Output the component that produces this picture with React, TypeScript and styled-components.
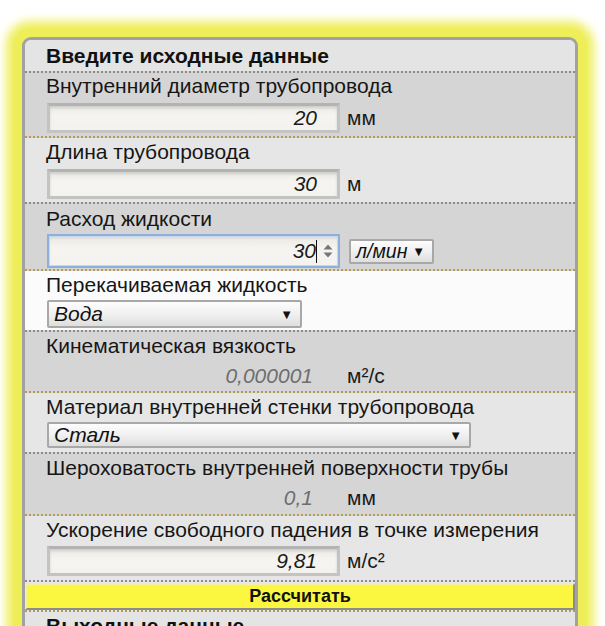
import React from "react";
import styled, { createGlobalStyle, css } from "styled-components";

const Global = createGlobalStyle`
  html, body { margin: 0; padding: 0; background: #ffffff; }
  body { font-family: "Liberation Sans", Arial, sans-serif; color: #111; overflow: hidden; }
`;

const Panel = styled.div`
  margin: 37px 0 0 22px;
  width: 550px;
  height: 620px;
  border: 3px solid #a2a2a2;
  border-bottom: none;
  border-radius: 9px 9px 0 0;
  background: #e6e6e6;
  box-shadow: 0 0 0 9px #eeee58, 0 0 10px 16px #efef62;
  overflow: hidden;
`;

const Header = styled.div`
  height: 31px;
  padding-left: 21px;
  display: flex;
  align-items: center;
  font-weight: bold;
  font-size: 21px;
  background: #e4e4e4;
  color: #111;
`;

type Tone = "light" | "dark" | "white";

const Row = styled.div<{ $tone: Tone; $h: number }>`
  height: ${(p) => p.$h}px;
  box-sizing: border-box;
  padding-left: 22px;
  display: flex;
  flex-direction: column;
  background: ${(p) => (p.$tone === "dark" ? "#d5d5d5" : p.$tone === "white" ? "#fbfbfb" : "#e6e6e6")};
  ${(p) =>
    p.$tone === "dark" &&
    css`
      border-top: 2px dotted #8d8d8d;
      border-bottom: 2px dotted #b39c55;
    `}
`;

const Label = styled.div<{ $mt: number }>`
  font-size: 21px;
  line-height: 24px;
  margin: ${(p) => p.$mt}px 0 0 -1px;
  color: #161616;
  white-space: nowrap;
`;

const Field = styled.div<{ $mt: number }>`
  display: flex;
  align-items: center;
  gap: 7px;
  margin-top: ${(p) => p.$mt}px;
`;

const InputBox = styled.div<{ $focus?: boolean }>`
  position: relative;
  width: 293px;
  height: 30px;
  box-sizing: border-box;
  border: 3px solid #c3c3c3;
  border-top-color: #b3b3b3;
  background: linear-gradient(#ebe9e4, #f5f4f0 40%, #f3f2ee);
  box-shadow: inset 0 2px 3px rgba(0, 0, 0, 0.12);
  display: flex;
  align-items: center;
  justify-content: flex-end;
  padding-right: 20px;
  font-size: 21px;
  font-style: italic;
  color: #1a1a1a;
  ${(p) =>
    p.$focus &&
    css`
      height: 34px;
      border: 2px solid #8eaedb;
      box-shadow: inset 0 0 0 1px #c9d8ee, inset 0 2px 3px rgba(0, 0, 0, 0.1);
      padding-right: 21px;
    `}
`;

const Caret = styled.span`
  display: inline-block;
  width: 1px;
  height: 23px;
  background: #111;
`;

const Spinner = styled.svg`
  position: absolute;
  right: 4px;
  top: 50%;
  transform: translateY(-50%);
`;

const Unit = styled.span`
  font-size: 21px;
  color: #1a1a1a;
`;

const SelectBox = styled.div<{ $w: number; $h: number; $fs?: number }>`
  width: ${(p) => p.$w}px;
  height: ${(p) => p.$h}px;
  box-sizing: border-box;
  border: 2px solid #a8a8a8;
  border-radius: 2px;
  background: linear-gradient(#fdfdfd, #f0f0f0 50%, #dedede);
  display: flex;
  align-items: center;
  justify-content: space-between;
  padding: 0 7px 0 5px;
  font-size: ${(p) => p.$fs ?? 21}px;
  font-style: italic;
  color: #111;
  white-space: nowrap;
  overflow: hidden;
`;

const Arrow = styled.span`
  font-size: 13px;
  font-style: normal;
  color: #111;
`;

const ValueBox = styled.div`
  width: 293px;
  box-sizing: border-box;
  padding-right: 27px;
  text-align: right;
  font-size: 21px;
  font-style: italic;
  color: #6e6e6e;
`;

const CalcButton = styled.div`
  height: 32px;
  box-sizing: border-box;
  border-top: 2px dotted #8d8d8d;
  border-bottom: 2px dotted #b39c55;
  background: #e6e6e6;
  display: flex;
`;

const ButtonFace = styled.div`
  flex: 1;
  margin-top: 1px;
  box-sizing: border-box;
  background: #fbf640;
  border: 2px solid;
  border-color: #f4f0a0 #8c8c8c #8c8c8c #f4f0a0;
  display: flex;
  align-items: center;
  justify-content: center;
  font-weight: bold;
  font-size: 18px;
  color: #111;
`;

const Section = styled.div`
  padding: 2px 0 0 21px;
  font-weight: bold;
  font-size: 21px;
  line-height: 24px;
  background: #e4e4e4;
`;

export default function App() {
  return (
    <>
      <Global />
      <Panel>
        <Header>Введите исходные данные</Header>
        <Row $tone="dark" $h={67}>
          <Label $mt={1}>Внутренний диаметр трубопровода</Label>
          <Field $mt={5}>
            <InputBox>20</InputBox>
            <Unit>мм</Unit>
          </Field>
        </Row>
        <Row $tone="light" $h={64}>
          <Label $mt={2}>Длина трубопровода</Label>
          <Field $mt={5}>
            <InputBox>30</InputBox>
            <Unit>м</Unit>
          </Field>
        </Row>
        <Row $tone="dark" $h={69}>
          <Label $mt={3}>Расход жидкости</Label>
          <Field $mt={3}>
            <InputBox $focus>
              30
              <Caret />
              <Spinner width="12" height="18" viewBox="0 0 12 18">
                <path d="M1.5 7.5 L6 2.5 L10.5 7.5 Z" fill="#777" />
                <path d="M1.5 10.5 L6 15.5 L10.5 10.5 Z" fill="#777" />
              </Spinner>
            </InputBox>
            <SelectBox $w={85} $h={25} $fs={19.5} style={{ marginLeft: 2 }}>
              л/мин <Arrow>▼</Arrow>
            </SelectBox>
          </Field>
        </Row>
        <Row $tone="white" $h={59}>
          <Label $mt={2}>Перекачиваемая жидкость</Label>
          <Field $mt={3}>
            <SelectBox $w={255} $h={28}>
              Вода <Arrow>▼</Arrow>
            </SelectBox>
          </Field>
        </Row>
        <Row $tone="dark" $h={63}>
          <Label $mt={2}>Кинематическая вязкость</Label>
          <Field $mt={6}>
            <ValueBox>0,000001</ValueBox>
            <Unit>м²/с</Unit>
          </Field>
        </Row>
        <Row $tone="light" $h={59}>
          <Label $mt={2}>Материал внутренней стенки трубопровода</Label>
          <Field $mt={3}>
            <SelectBox $w={424} $h={26}>
              Сталь <Arrow>▼</Arrow>
            </SelectBox>
          </Field>
        </Row>
        <Row $tone="dark" $h={64}>
          <Label $mt={2}>Шероховатость внутренней поверхности трубы</Label>
          <Field $mt={6}>
            <ValueBox>0,1</ValueBox>
            <Unit>мм</Unit>
          </Field>
        </Row>
        <Row $tone="light" $h={64}>
          <Label $mt={2}>Ускорение свободного падения в точке измерения</Label>
          <Field $mt={4}>
            <InputBox>9,81</InputBox>
            <Unit>м/с²</Unit>
          </Field>
        </Row>
        <CalcButton>
          <ButtonFace>Рассчитать</ButtonFace>
        </CalcButton>
        <Section>Выходные данные</Section>
      </Panel>
    </>
  );
}
